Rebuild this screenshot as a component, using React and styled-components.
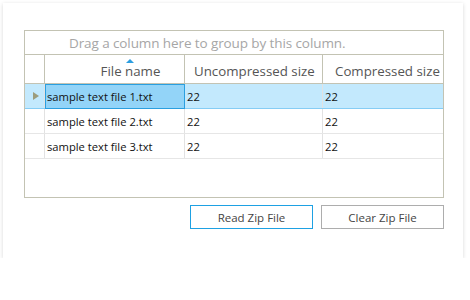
import React from 'react';
import styled, { createGlobalStyle } from 'styled-components';

const files = [
  { name: 'sample text file 1.txt', uncompressed: 22, compressed: 22 },
  { name: 'sample text file 2.txt', uncompressed: 22, compressed: 22 },
  { name: 'sample text file 3.txt', uncompressed: 22, compressed: 22 },
];

const App = () => {
  const selected = 0;

  return (
    <>
      <GlobalStyle />
      <Card>
        <Grid>
          <GroupPanel>Drag a column here to group by this column.</GroupPanel>
          <HeaderRow>
            <IndicatorHead />
            <HeaderCell center>
              <SortArrow />
              File name
            </HeaderCell>
            <HeaderCell>Uncompressed size</HeaderCell>
            <HeaderCell last>Compressed size</HeaderCell>
          </HeaderRow>
          {files.map((f, i) => (
            <Row key={f.name} selected={i === selected}>
              <Indicator>{i === selected && <RowArrow />}</Indicator>
              <Cell current={i === selected}>{f.name}</Cell>
              <Cell>{f.uncompressed}</Cell>
              <Cell last>{f.compressed}</Cell>
            </Row>
          ))}
        </Grid>
        <Buttons>
          <Button primary>Read Zip File</Button>
          <Button>Clear Zip File</Button>
        </Buttons>
      </Card>
    </>
  );
};

export default App;

const GlobalStyle = createGlobalStyle`
  body {
    margin: 0;
    background: #ffffff;
    font-family: "Open Sans", "Noto Sans", sans-serif;
  }
`;

const Card = styled.div`
  margin: 3px 0 0 3px;
  width: 460px;
  height: 255px;
  box-sizing: border-box;
  padding: 27px 19px 0 21px;
  background: #ffffff;
  box-shadow: 0 1px 4px rgba(0, 0, 0, 0.16);
  display: flex;
  flex-direction: column;
`;

const Grid = styled.div`
  width: 420px;
  height: 168px;
  box-sizing: border-box;
  border: 1px solid #c3c3b3;
  display: flex;
  flex-direction: column;
`;

const GroupPanel = styled.div`
  height: 23px;
  border-bottom: 1px solid #c3c3b3;
  padding-left: 44px;
  display: flex;
  align-items: center;
  font-size: 13.5px;
  color: #a6a6a6;
  letter-spacing: -0.1px;
  white-space: nowrap;
`;

const HeaderRow = styled.div`
  display: grid;
  grid-template-columns: 20px 140px 138px 1fr;
  height: 29px;
  box-sizing: border-box;
  border-bottom: 1px solid #c3c3b3;
`;

const IndicatorHead = styled.div`
  border-right: 1px solid #c3c3b3;
`;

const HeaderCell = styled.div`
  position: relative;
  border-right: ${({ last }) => (last ? 'none' : '1px solid #c3c3b3')};
  display: flex;
  align-items: center;
  justify-content: ${({ center }) => (center ? 'center' : 'flex-start')};
  padding: 3px 0 0 ${({ center, last }) => (center ? '32px' : last ? '12px' : '9px')};
  font-size: 13.3px;
  color: #555555;
  white-space: nowrap;
  overflow: hidden;
`;

const SortArrow = styled.span`
  position: absolute;
  top: 4px;
  left: 81px;
  width: 0;
  height: 0;
  border-left: 4px solid transparent;
  border-right: 4px solid transparent;
  border-bottom: 4px solid #2c9ee0;
`;

const Row = styled.div`
  display: grid;
  grid-template-columns: 20px 140px 138px 1fr;
  height: 25px;
  box-sizing: border-box;
  border-bottom: 1px solid ${({ selected }) => (selected ? '#86cdf5' : '#e6e6e6')};
  background: ${({ selected }) => (selected ? '#c3e9fd' : 'transparent')};
`;

const Indicator = styled.div`
  border-right: 1px solid #e2e2e2;
  display: flex;
  align-items: center;
  padding-left: 8px;
`;

const RowArrow = styled.span`
  width: 0;
  height: 0;
  border-top: 4px solid transparent;
  border-bottom: 4px solid transparent;
  border-left: 6px solid #9c9c7c;
`;

const Cell = styled.div`
  display: flex;
  align-items: center;
  box-sizing: border-box;
  padding-left: 2px;
  font-size: 11.2px;
  color: #111111;
  white-space: nowrap;
  overflow: hidden;
  border-right: ${({ last }) => (last ? 'none' : '1px solid #e2e2e2')};
  ${({ current }) =>
    current &&
    `
    background: #93d4f8;
    border: 1px solid #2a9fe0;
    padding-left: 1px;
    margin-bottom: -1px;
  `}
`;

const Buttons = styled.div`
  display: flex;
  justify-content: flex-end;
  gap: 8px;
  width: 420px;
  margin-top: 7px;
`;

const Button = styled.button`
  width: 123px;
  height: 24px;
  box-sizing: border-box;
  background: #ffffff;
  border: 1px solid ${({ primary }) => (primary ? '#1ea1e3' : '#adadad')};
  font-family: "Open Sans", "Noto Sans", sans-serif;
  font-size: 11.5px;
  color: #444444;
  padding: 0;
  cursor: pointer;
`;
